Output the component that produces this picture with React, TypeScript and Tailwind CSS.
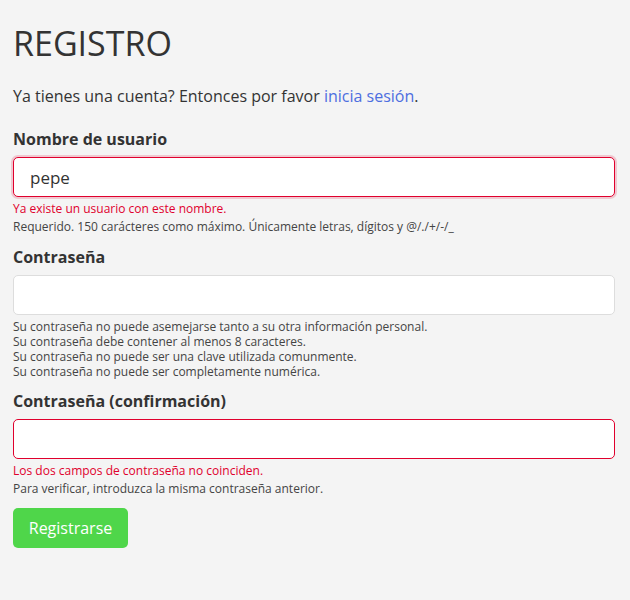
export default function App() {
  return (
    <div
      className="min-h-[600px] bg-[#f4f4f4] px-[13px] pt-[22px] text-[#333333]"
      style={{ fontFamily: '"Open Sans", "Noto Sans", sans-serif' }}
    >
      <h1 className="text-[34px] leading-[42px] font-normal text-[#333]">REGISTRO</h1>
      <p className="mt-[20px] text-[16px] leading-[24px]">
        Ya tienes una cuenta? Entonces por favor{" "}
        <a href="#" className="text-[#4d6ee0]">inicia sesión</a>.
      </p>

      <form className="mt-[19px]" onSubmit={(e) => e.preventDefault()}>
        <label className="block text-[16px] font-bold leading-[24px]">Nombre de usuario</label>
        <input
          defaultValue="pepe"
          className="mt-[6px] block h-[40px] w-[602px] rounded-[5px] border border-[#e0002d] bg-white px-[16px] text-[17px] text-[#333] shadow-[0_0_0_2px_rgba(224,0,45,0.18)] outline-none"
        />
        <p className="mt-[3px] text-[12px] leading-[18px] text-[#e0002d]">Ya existe un usuario con este nombre.</p>
        <p className="text-[12px] leading-[18px] text-[#444]">
          Requerido. 150 carácteres como máximo. Únicamente letras, dígitos y @/./+/-/_
        </p>

        <label className="mt-[9px] block text-[16px] font-bold leading-[24px]">Contraseña</label>
        <input
          type="password"
          className="mt-[6px] block h-[40px] w-[602px] rounded-[5px] border border-[#dddddd] bg-white px-[16px] text-[17px] outline-none"
        />
        <ul className="mt-[4px] text-[12px] leading-[15px] text-[#444]">
          <li>Su contraseña no puede asemejarse tanto a su otra información personal.</li>
          <li>Su contraseña debe contener al menos 8 caracteres.</li>
          <li>Su contraseña no puede ser una clave utilizada comunmente.</li>
          <li>Su contraseña no puede ser completamente numérica.</li>
        </ul>

        <label className="mt-[10px] block text-[16px] font-bold leading-[24px]">Contraseña (confirmación)</label>
        <input
          type="password"
          className="mt-[6px] block h-[40px] w-[602px] rounded-[5px] border border-[#e0002d] bg-white px-[16px] text-[17px] outline-none"
        />
        <p className="mt-[3px] text-[12px] leading-[18px] text-[#e0002d]">Los dos campos de contraseña no coinciden.</p>
        <p className="text-[12px] leading-[18px] text-[#444]">Para verificar, introduzca la misma contraseña anterior.</p>

        <button
          type="submit"
          className="mt-[10px] h-[40px] w-[115px] rounded-[5px] bg-[#4fd64a] text-[16px] text-white"
        >
          Registrarse
        </button>
      </form>
    </div>
  );
}
